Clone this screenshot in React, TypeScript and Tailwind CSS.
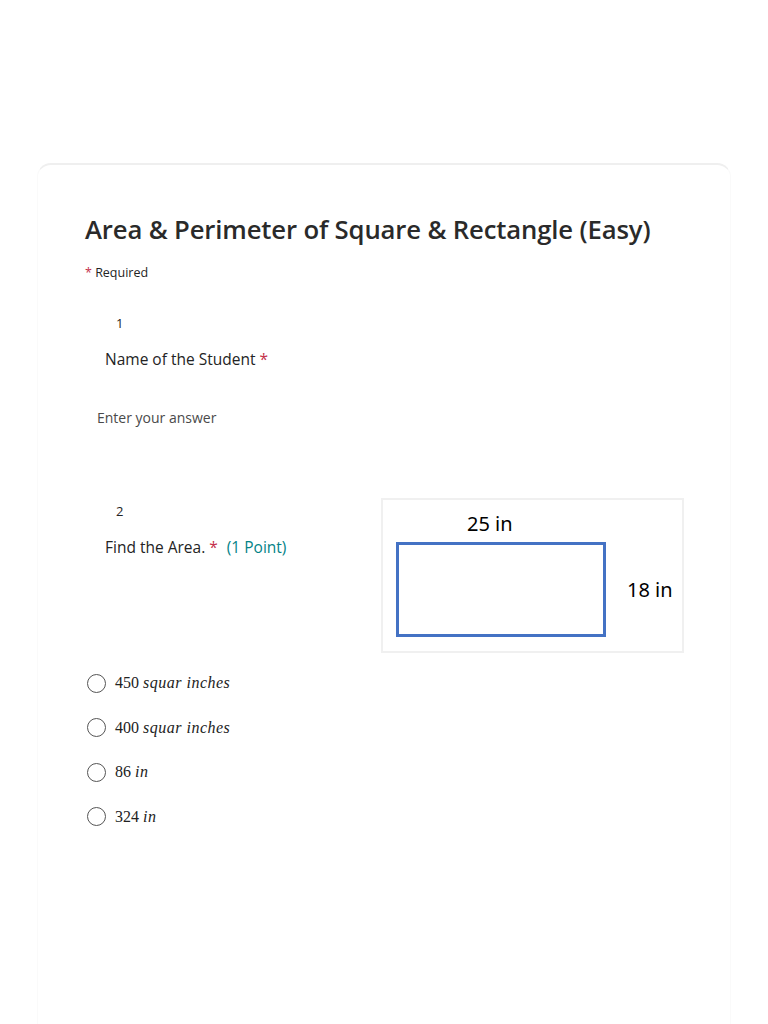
import React from 'react';

const options = [
  { num: '450', unit: 'squar inches' },
  { num: '400', unit: 'squar inches' },
  { num: '86', unit: 'in' },
  { num: '324', unit: 'in' },
];

function Radio() {
  return <span className="w-[19px] h-[19px] rounded-full border border-[#555] bg-white shrink-0" />;
}

export default function App() {
  return (
    <div className="min-h-[1024px] w-[768px] bg-white font-['Open_Sans',sans-serif] text-[#242424]">
      <div className="pt-[163px] px-[37px]">
        {/* Form card */}
        <div className="h-[861px] rounded-t-[14px] border-t-2 border-x border-[#efefef] border-x-[#fafafa]">
          <div className="pl-[47px] pr-[40px] pt-[48px]">
            <h1 className="text-[25.7px] leading-[34px] font-semibold tracking-[-0.15px] text-[#2a2a2a]">
              Area &amp; Perimeter of Square &amp; Rectangle (Easy)
            </h1>
            <p className="mt-[17px] text-[12.5px] leading-[18px]">
              <span className="text-[#c4314b]">*</span> Required
            </p>

            {/* Question 1 */}
            <div className="mt-[32px]">
              <div className="pl-[31px] text-[13px] leading-[18px]">1</div>
              <div className="mt-[16px] pl-[20px] text-[15.5px] leading-[22px]">
                Name of the Student <span className="text-[#c4314b]">*</span>
              </div>
              <div className="mt-[37px] pl-[12px] text-[14px] leading-[22px] text-[#4a4a4a]">Enter your answer</div>
            </div>

            {/* Question 2 */}
            <div className="mt-[69px] flex">
              <div className="w-[296px] shrink-0">
                <div className="pt-[4px] pl-[31px] text-[13px] leading-[18px]">2</div>
                <div className="mt-[16px] pl-[20px] text-[15.5px] leading-[22px]">
                  Find the Area. <span className="text-[#c4314b]">*</span>
                  <span className="ml-[9px] text-[#038387]">(1 Point)</span>
                </div>
              </div>
              <div className="w-[303px] h-[155px] border-2 border-[#f0f0f0] flex flex-col font-['Noto_Sans',sans-serif] text-black">
                <div className="h-[42px] pl-[84px] pt-[11px] text-[20px] leading-[26px]">25 in</div>
                <div className="flex items-center">
                  <div className="ml-[13px] w-[210px] h-[95px] border-[3px] border-[#4472c4]" />
                  <div className="ml-[21px] text-[20px] leading-[26px]">18 in</div>
                </div>
              </div>
            </div>

            {/* Options */}
            <div className="mt-[20px] flex flex-col gap-[24.5px] pl-[2px]">
              {options.map((o) => (
                <label key={o.num + o.unit} className="flex items-center gap-[9px] h-[20px]">
                  <Radio />
                  <span className="font-['Liberation_Serif',serif] text-[16px] leading-[20px] text-[#222]">
                    {o.num} <i className="tracking-[0.5px]">{o.unit}</i>
                  </span>
                </label>
              ))}
            </div>
          </div>
        </div>
      </div>
    </div>
  );
}
